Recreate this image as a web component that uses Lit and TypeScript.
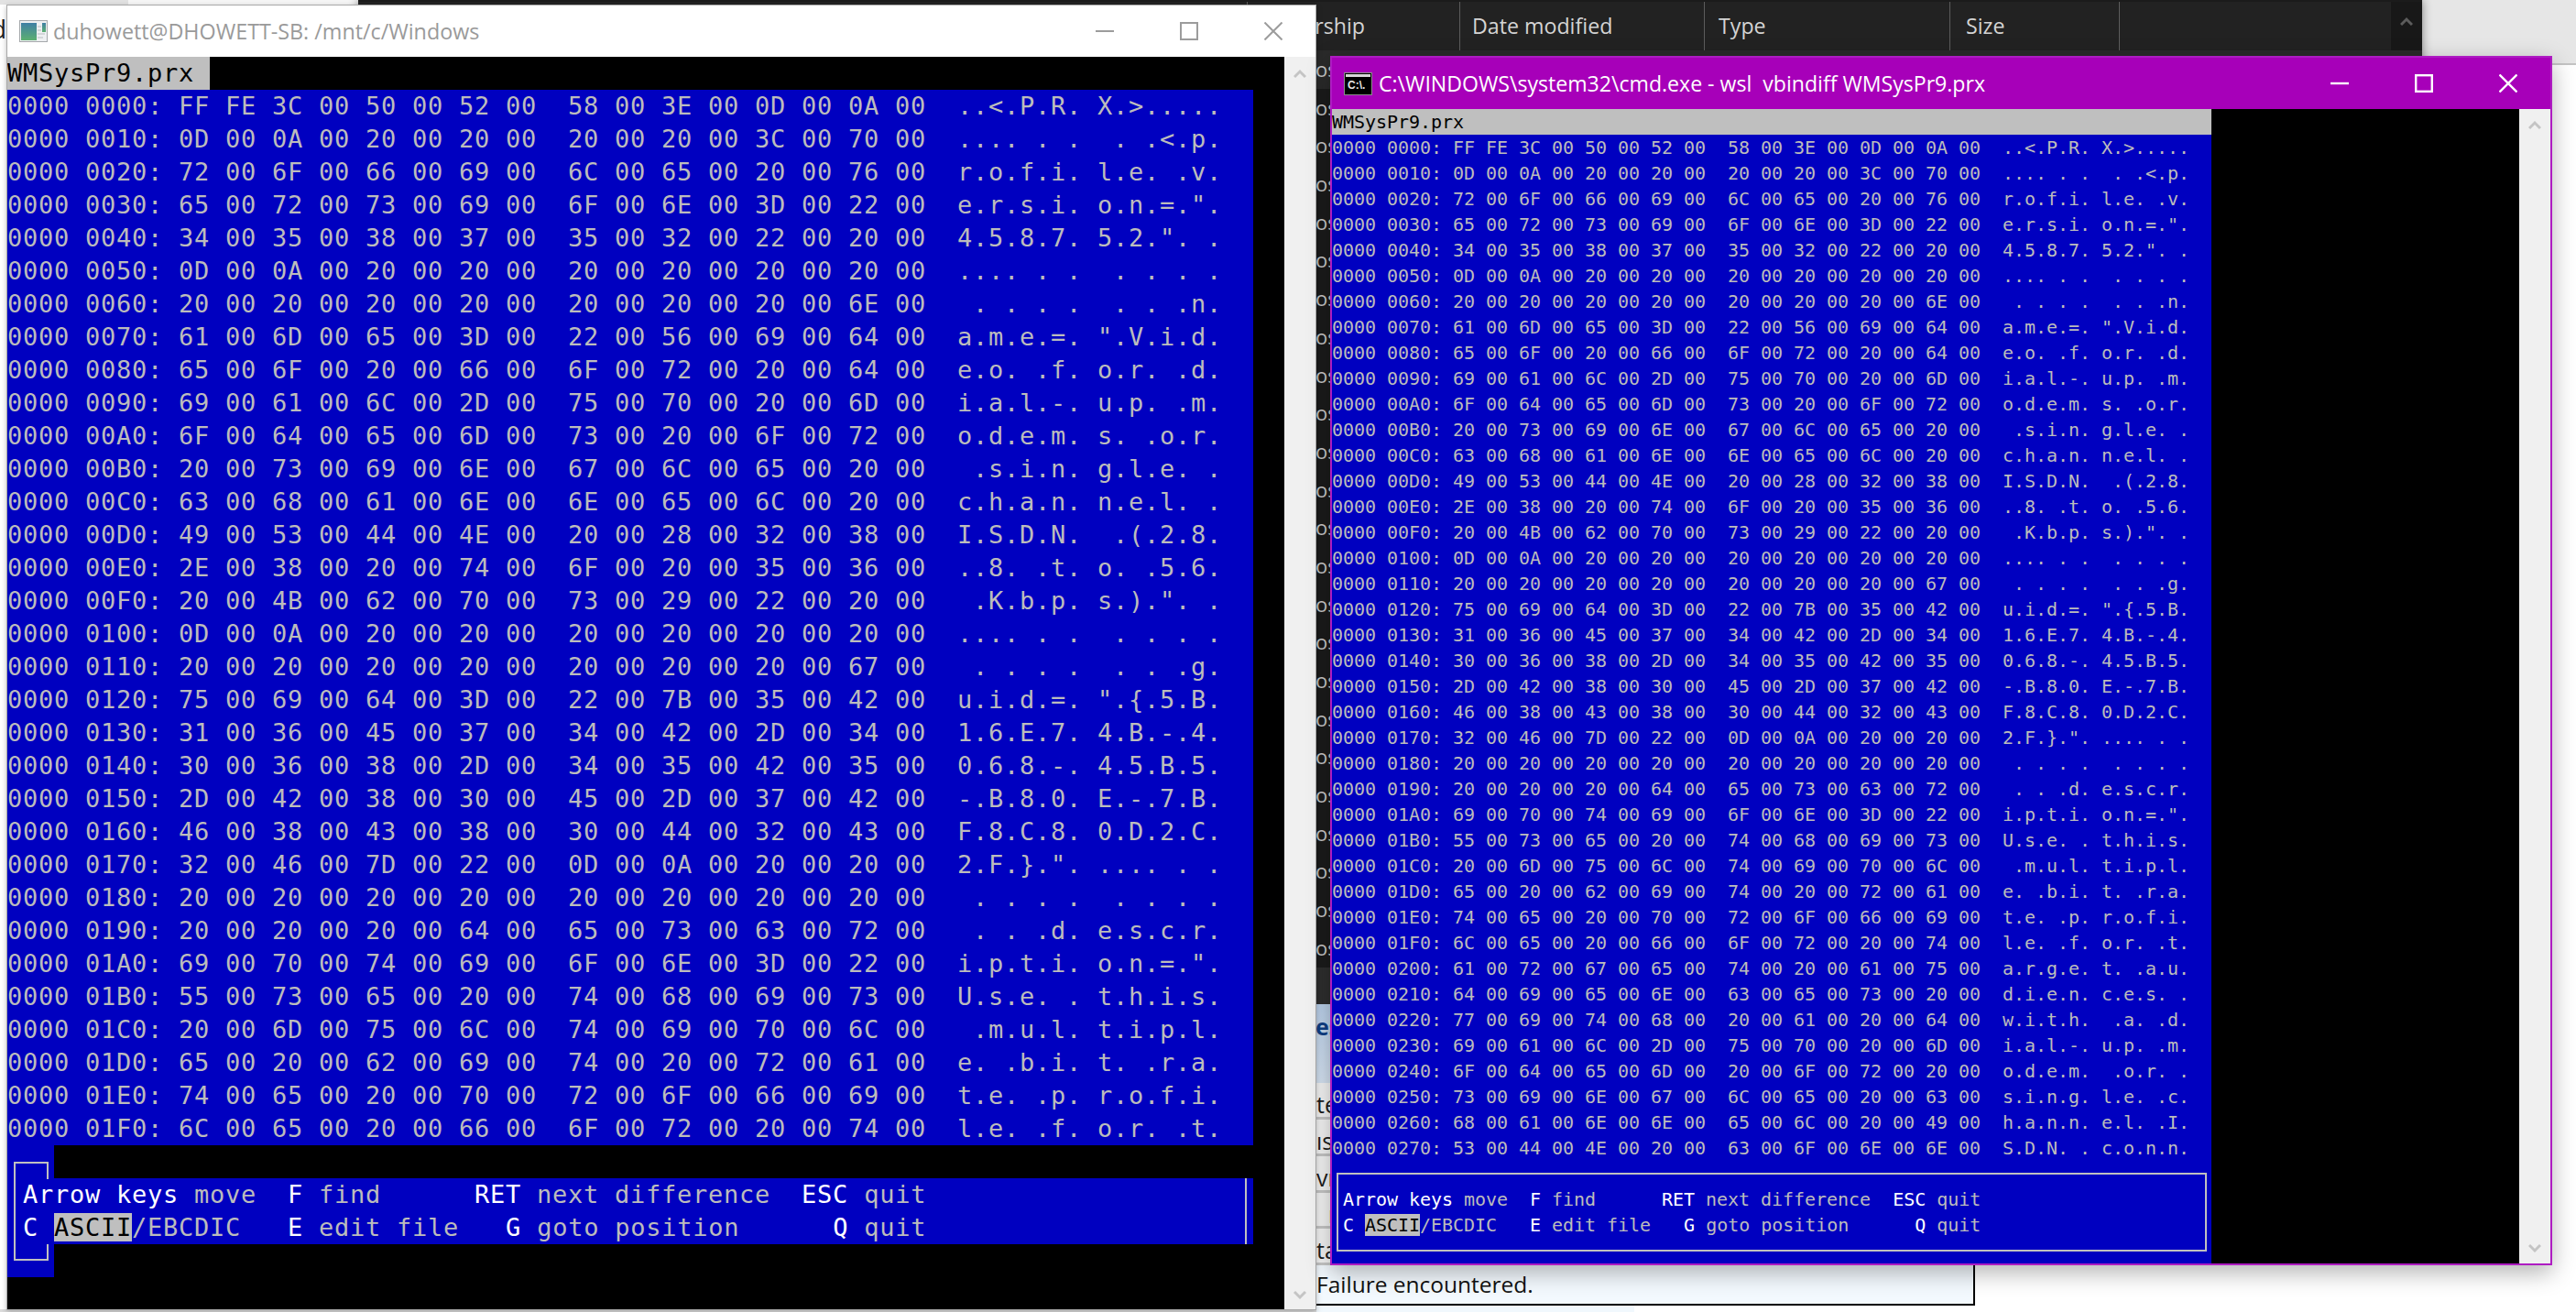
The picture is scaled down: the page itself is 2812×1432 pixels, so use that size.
import { LitElement, html, css, svg } from "lit";
import { customElement } from "lit/decorators.js";

const TEXT =
  '<PRX>\r\n\r\n    <profile version="458752" \r\n             name="Video for dial-up modems or single channel ISDN (28.8 to 56 Kbps)" \r\n             guid="{5B16E74B-4068-45B5-B80E-7BF8C80D2C2F}"\r\n             description="Use this multiple bit rate profile for target audiences with a dial-up modem or single channel ISDN conn';

const hex2 = (n: number) => n.toString(16).toUpperCase().padStart(2, "0");

function dump(count: number): string[] {
  const bytes: number[] = [0xff, 0xfe];
  for (const ch of TEXT) bytes.push(ch.charCodeAt(0), 0);
  const out: string[] = [];
  for (let r = 0; r < count; r++) {
    const b = bytes.slice(r * 16, r * 16 + 16);
    const asc = (x: number) => (x >= 0x20 && x < 0x7f ? String.fromCharCode(x) : ".");
    const h = (s: number[]) => s.map(hex2).join(" ");
    const a = (s: number[]) => s.map(asc).join("");
    out.push(
      `0000 ${hex2(r >> 4).padStart(2, "0")}${hex2((r & 15) << 4)}: ${h(b.slice(0, 8))}  ${h(b.slice(8))}  ${a(b.slice(0, 8))} ${a(b.slice(8))}`
    );
  }
  return out;
}

const chevUp = svg`<path d="M1 9 L7 3 L13 9" fill="none" stroke="currentColor" stroke-width="3"/>`;
const chevDown = svg`<path d="M1 2 L7 8 L13 2" fill="none" stroke="currentColor" stroke-width="3"/>`;
const chev = (p: unknown) => html`<svg class="chev" width="14" height="11" viewBox="0 0 14 11">${p}</svg>`;

const controls = (sw: number) => html`<div class="controls">
  <div class="ctl"><svg width="20" height="20" viewBox="0 0 20 20"><path d="M0 10H20" stroke="currentColor" stroke-width="${sw}"/></svg></div>
  <div class="ctl"><svg width="20" height="20" viewBox="0 0 20 20"><rect x="${sw / 2}" y="${sw / 2}" width="${20 - sw}" height="${20 - sw}" fill="none" stroke="currentColor" stroke-width="${sw}"/></svg></div>
  <div class="ctl"><svg width="20" height="20" viewBox="0 0 20 20"><path d="M0.5 0.5L19.5 19.5M19.5 0.5L0.5 19.5" stroke="currentColor" stroke-width="${sw}"/></svg></div>
</div>`;

const helpRows = html`<div class="row blue"> <b>Arrow keys</b> move  <b>F</b> find      <b>RET</b> next difference  <b>ESC</b> quit</div><div class="row blue"> <b>C</b> <i>ASCII</i>/EBCDIC   <b>E</b> edit file   <b>G</b> goto position      <b>Q</b> quit</div>`;

@customElement("app-root")
export class AppRoot extends LitElement {
  static styles = css`
    :host { display: block; position: relative; width: 2812px; height: 1432px; overflow: hidden; background: #fff; }
    .abs { position: absolute; }

    /* things behind the two consoles */
    .scrap1 { left: 0; top: 0; width: 140px; height: 5px; background: #e2e2e2; }
    .scrap2 { left: 140px; top: 0; width: 251px; height: 5px; background: #f6f6f6; }
    .scrapd { left: 0; top: 14px; width: 7px; overflow: hidden; direction: rtl; font: 27px/36px "Open Sans", sans-serif; color: #222; }
    .floor { left: 0; top: 1429px; width: 1437px; height: 3px; background: #dcdcdc; }
    .corner { left: 2644px; top: 0; width: 168px; height: 69px; background: #e6e6e6; border-bottom: 2px solid #c4c4c4; }
    .strip { left: 1437px; top: 1425px; width: 347px; height: 7px; background: #f1f8fd; }

    .explorer {
      left: 391px; top: 0; width: 2253px; height: 1096px; background: #1b1b1b;
      box-shadow: 0 0 10px rgba(0,0,0,.45); font-family: "Open Sans", sans-serif;
    }
    .ehead { display: flex; height: 53px; margin-top: 2px; background: #222; color: #d4d4d4; font-size: 23.2px; line-height: 53px; }
    .ecol { box-sizing: border-box; border-right: 1px solid #5c5c5c; white-space: nowrap; }
    .ec0 { width: 971px; }
    .ec1 { width: 232px; padding-left: 10px; }
    .ec2 { width: 267px; padding-left: 13px; }
    .ec3 { width: 268px; padding-left: 15px; }
    .ec4 { width: 185px; padding-left: 17px; }
    .escroll { margin-left: 296px; width: 34px; display: flex; justify-content: center; padding-top: 16px; color: #5c5c5c; background: #181818; height: 37px; }
    .erows { display: flex; flex-direction: column; color: #c9c9c9; font-size: 22px; }
    .erow { height: 41.7px; line-height: 41.7px; padding-left: 1045px; }
    .erow span { display: block; width: 16px; overflow: hidden; }
    .erow.first { background: #2a2a2a; }
    .efoot { height: 40px; background: #2e2e2e; }

    .report {
      left: 800px; top: 1096px; width: 1354px; height: 327px;
      display: flex; flex-direction: column; background: #fff;
      border-right: 2px solid #000; border-bottom: 2px solid #000;
      font-family: "Open Sans", sans-serif;
    }
    .rhead { height: 87px; background: linear-gradient(#b9cfe9, #d5e2f1); color: #0f3f86; font-weight: 700; font-size: 25px; line-height: 48px; padding-left: 636px; }
    .rhead span { display: block; width: 16px; overflow: hidden; }
    .rrow { height: 37px; line-height: 46px; font-size: 25px; color: #1c1c1c; padding-left: 637px; background: #f4f4f4; border-bottom: 3px solid #c6c6c6; white-space: pre; overflow: hidden; }
    .rrow span { display: block; width: 15px; overflow: hidden; }
    .rfail { flex: 1; font-size: 24.5px; line-height: 42px; color: #111; padding-left: 637px; background: #f3f9fe; }

    /* console windows */
    .win { display: flex; flex-direction: column; box-sizing: border-box; }
    .left { left: 7px; top: 5px; width: 1430px; height: 1425px; border: 1px solid #a9a9a9; background: #fff; box-shadow: 0 2px 6px rgba(0,0,0,.25); }
    .right { left: 1452px; top: 61px; width: 1334px; height: 1320px; border: 2px solid #ae1cc2; box-shadow: 0 8px 24px rgba(0,0,0,.3); }

    .title { height: 56px; flex: none; display: flex; align-items: center; padding-left: 13px; font-family: "Open Sans", sans-serif; white-space: pre; }
    .left .title { background: #fff; color: #9a9a9a; font-size: 23.3px; gap: 6px; }
    .right .title { background: #a700b9; color: #fff; font-size: 23.1px; gap: 7px; }
    .ttext { flex: 1; }
    .controls { display: flex; }
    .ctl { width: 92px; display: flex; justify-content: center; }
    .left .ctl { color: #9c9c9c; }
    .right .ctl { color: #fff; }

    .body { flex: 1; display: flex; min-height: 0; }
    .term { flex: 1; background: #000; font-family: "DejaVu Sans Mono", monospace; color: #bcbcbc; font-kerning: none; }
    .big { font-size: 27px; letter-spacing: 0.745px; line-height: 36px; }
    .small { font-size: 20px; letter-spacing: -0.04px; line-height: 28px; }
    .row { overflow: hidden; white-space: pre; }
    .big .row { height: 36px; width: 1360px; }
    .small .row { height: 28px; width: 960px; }
    .blue { background: #0000c0; }
    .gray { background: #bfbfbf; color: #000; }
    .big .row.name { width: 221px; }
    .big .row.stub { width: 51px; }
    b { font-weight: 400; color: #fff; }
    i { font-style: normal; background: #bfbfbf; color: #000; }
    .help { position: relative; }
    .big .help { width: 1360px; }

    .f { position: absolute; box-sizing: border-box; border: 2px solid #c0c0c0; }
    .ftop { left: 7px; top: 18px; width: 38px; height: 19px; border-bottom: 0; }
    .fbot { left: 7px; top: 108px; width: 38px; height: 18px; border-top: 0; }
    .fl { left: 7px; top: 36px; width: 2px; height: 72px; border-width: 0 0 0 2px; }
    .fr { left: 1351px; top: 36px; width: 2px; height: 72px; border-width: 0 0 0 2px; }
    .fbox { left: 5px; top: 13px; width: 950px; height: 86px; }

    .scroll { width: 34px; flex: none; background: #f0f0f0; color: #c4c4c4; display: flex; flex-direction: column; justify-content: space-between; align-items: center; }
    .left .scroll { padding: 13px 0 10px; }
    .right .scroll { padding: 12px 0 11px; }
    .chev { display: block; }
  `;

  render() {
    const rows = dump(40);
    return html`
      <div class="abs scrap1"></div>
      <div class="abs scrap2"></div>
      <div class="abs scrapd">d</div>
      <div class="abs floor"></div>
      <div class="abs corner"></div>
      <div class="abs strip"></div>

      <div class="abs explorer">
        <div class="ehead">
          <div class="ecol ec0"></div>
          <div class="ecol ec1">Ownership</div>
          <div class="ecol ec2">Date modified</div>
          <div class="ecol ec3">Type</div>
          <div class="ecol ec4">Size</div>
          <div class="escroll">${chev(chevUp)}</div>
        </div>
        <div class="erows">
          ${Array.from({ length: 24 }, (_, i) => html`<div class="erow ${i === 0 ? "first" : ""}"><span>os</span></div>`)}
          <div class="efoot"></div>
        </div>
      </div>

      <div class="abs report">
        <div class="rhead"><span>es</span></div>
        <div class="rrow"><span>te</span></div>
        <div class="rrow"><span>ıs</span></div>
        <div class="rrow"><span>vr</span></div>
        <div class="rrow"><span>  r</span></div>
        <div class="rrow"><span>ta</span></div>
        <div class="rfail">Failure encountered.</div>
      </div>

      <div class="abs win left">
        <div class="title">
          <svg width="31" height="24" viewBox="0 0 31 24">
            <defs><linearGradient id="tg" x1="0" y1="0" x2="0" y2="1"><stop offset="0" stop-color="#3f7fa5"/><stop offset="1" stop-color="#5cb070"/></linearGradient></defs>
            <rect x="0.5" y="0.5" width="30" height="23" fill="#eef0f2" stroke="#a5a8ab"/>
            <rect x="2" y="3" width="17" height="19" fill="url(#tg)"/>
            <rect x="25" y="3" width="4" height="10" fill="url(#tg)"/>
            <path d="M20 7h4M20 11h4M20 15h8M20 19h6" stroke="#b8bcc0" stroke-width="1"/>
          </svg>
          <div class="ttext">duhowett@DHOWETT-SB: /mnt/c/Windows</div>
          ${controls(2)}
        </div>
        <div class="body">
          <div class="term big">
            <div class="row gray name">WMSysPr9.prx</div>
            ${rows.slice(0, 32).map((r) => html`<div class="row blue">${r}</div>`)}
            <div class="help">
              <div class="row blue stub"></div>
              ${helpRows}
              <div class="row blue stub"></div>
              <div class="f ftop"></div>
              <div class="f fl"></div>
              <div class="f fr"></div>
              <div class="f fbot"></div>
            </div>
          </div>
          <div class="scroll">${chev(chevUp)}${chev(chevDown)}</div>
        </div>
      </div>

      <div class="abs win right">
        <div class="title">
          <svg width="31" height="25" viewBox="0 0 31 25">
            <rect x="0.5" y="0.5" width="30" height="24" fill="#000" stroke="#8c8c8c"/>
            <rect x="2" y="2" width="27" height="3" fill="#d8d8d8"/>
            <text x="4" y="18" font-family="Liberation Sans, sans-serif" font-size="12" font-weight="700" fill="#e6e6e6">C:\\.</text>
          </svg>
          <div class="ttext">C:\\WINDOWS\\system32\\cmd.exe - wsl  vbindiff WMSysPr9.prx</div>
          ${controls(2.4)}
        </div>
        <div class="body">
          <div class="term small">
            <div class="row gray">WMSysPr9.prx</div>
            ${rows.map((r) => html`<div class="row blue">${r}</div>`)}
            <div class="help">
              <div class="row blue"></div>
              ${helpRows}
              <div class="row blue"></div>
              <div class="f fbox"></div>
            </div>
          </div>
          <div class="scroll">${chev(chevUp)}${chev(chevDown)}</div>
        </div>
      </div>
    `;
  }
}

declare global {
  interface HTMLElementTagNameMap { "app-root": AppRoot; }
}
